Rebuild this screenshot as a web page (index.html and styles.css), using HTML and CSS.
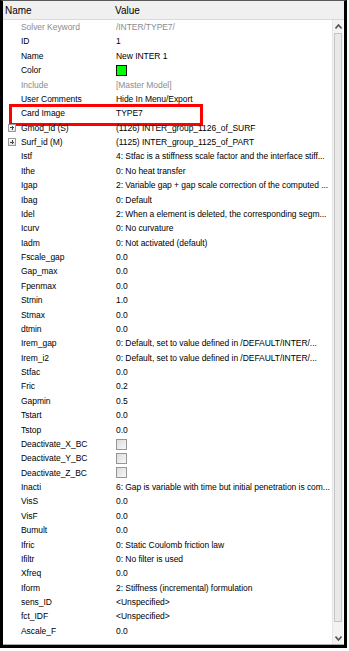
FILE: index.html
```html
<!DOCTYPE html>
<html>
<head>
<meta charset="utf-8">
<link rel="stylesheet" href="styles.css">
</head>
<body>
<div class="frame">
  <div class="header">
    <span class="h-name">Name</span>
    <span class="h-value">Value</span>
  </div>
  <div class="panel">
    <div class="list">
      <div class="row dim"><div class="name"><span class="gutter"></span>Solver Keyword</div><div class="value">/INTER/TYPE7/</div></div>
      <div class="row"><div class="name"><span class="gutter"></span>ID</div><div class="value">1</div></div>
      <div class="row"><div class="name"><span class="gutter"></span>Name</div><div class="value">New INTER 1</div></div>
      <div class="row"><div class="name"><span class="gutter"></span>Color</div><div class="value"><span class="swatch"></span></div></div>
      <div class="row dim"><div class="name"><span class="gutter"></span>Include</div><div class="value">[Master Model]</div></div>
      <div class="row"><div class="name"><span class="gutter"></span>User Comments</div><div class="value">Hide In Menu/Export</div></div>
      <div class="row marked"><div class="name"><span class="gutter"></span>Card Image</div><div class="value">TYPE7</div></div>
      <div class="row"><div class="name"><span class="gutter"><span class="expander"></span></span>Gmod_id (S)</div><div class="value">(1126) INTER_group_1126_of_SURF</div></div>
      <div class="row"><div class="name"><span class="gutter"><span class="expander"></span></span>Surf_id (M)</div><div class="value">(1125) INTER_group_1125_of_PART</div></div>
      <div class="row"><div class="name"><span class="gutter"></span>Istf</div><div class="value">4: Stfac is a stiffness scale factor and the interface stiff...</div></div>
      <div class="row"><div class="name"><span class="gutter"></span>Ithe</div><div class="value">0: No heat transfer</div></div>
      <div class="row"><div class="name"><span class="gutter"></span>Igap</div><div class="value">2: Variable gap + gap scale correction of the computed ...</div></div>
      <div class="row"><div class="name"><span class="gutter"></span>Ibag</div><div class="value">0: Default</div></div>
      <div class="row"><div class="name"><span class="gutter"></span>Idel</div><div class="value">2: When a element is deleted, the corresponding segm...</div></div>
      <div class="row"><div class="name"><span class="gutter"></span>Icurv</div><div class="value">0: No curvature</div></div>
      <div class="row"><div class="name"><span class="gutter"></span>Iadm</div><div class="value">0: Not activated (default)</div></div>
      <div class="row"><div class="name"><span class="gutter"></span>Fscale_gap</div><div class="value">0.0</div></div>
      <div class="row"><div class="name"><span class="gutter"></span>Gap_max</div><div class="value">0.0</div></div>
      <div class="row"><div class="name"><span class="gutter"></span>Fpenmax</div><div class="value">0.0</div></div>
      <div class="row"><div class="name"><span class="gutter"></span>Stmin</div><div class="value">1.0</div></div>
      <div class="row"><div class="name"><span class="gutter"></span>Stmax</div><div class="value">0.0</div></div>
      <div class="row"><div class="name"><span class="gutter"></span>dtmin</div><div class="value">0.0</div></div>
      <div class="row"><div class="name"><span class="gutter"></span>Irem_gap</div><div class="value">0: Default, set to value defined in /DEFAULT/INTER/...</div></div>
      <div class="row"><div class="name"><span class="gutter"></span>Irem_i2</div><div class="value">0: Default, set to value defined in /DEFAULT/INTER/...</div></div>
      <div class="row"><div class="name"><span class="gutter"></span>Stfac</div><div class="value">0.0</div></div>
      <div class="row"><div class="name"><span class="gutter"></span>Fric</div><div class="value">0.2</div></div>
      <div class="row"><div class="name"><span class="gutter"></span>Gapmin</div><div class="value">0.5</div></div>
      <div class="row"><div class="name"><span class="gutter"></span>Tstart</div><div class="value">0.0</div></div>
      <div class="row"><div class="name"><span class="gutter"></span>Tstop</div><div class="value">0.0</div></div>
      <div class="row"><div class="name"><span class="gutter"></span>Deactivate_X_BC</div><div class="value"><span class="check"></span></div></div>
      <div class="row"><div class="name"><span class="gutter"></span>Deactivate_Y_BC</div><div class="value"><span class="check"></span></div></div>
      <div class="row"><div class="name"><span class="gutter"></span>Deactivate_Z_BC</div><div class="value"><span class="check"></span></div></div>
      <div class="row"><div class="name"><span class="gutter"></span>Inacti</div><div class="value">6: Gap is variable with time but initial penetration is com...</div></div>
      <div class="row"><div class="name"><span class="gutter"></span>VisS</div><div class="value">0.0</div></div>
      <div class="row"><div class="name"><span class="gutter"></span>VisF</div><div class="value">0.0</div></div>
      <div class="row"><div class="name"><span class="gutter"></span>Bumult</div><div class="value">0.0</div></div>
      <div class="row"><div class="name"><span class="gutter"></span>Ifric</div><div class="value">0: Static Coulomb friction law</div></div>
      <div class="row"><div class="name"><span class="gutter"></span>Ifiltr</div><div class="value">0: No filter is used</div></div>
      <div class="row"><div class="name"><span class="gutter"></span>Xfreq</div><div class="value">0.0</div></div>
      <div class="row"><div class="name"><span class="gutter"></span>Iform</div><div class="value">2: Stiffness (incremental) formulation</div></div>
      <div class="row"><div class="name"><span class="gutter"></span>sens_ID</div><div class="value">&lt;Unspecified&gt;</div></div>
      <div class="row"><div class="name"><span class="gutter"></span>fct_IDF</div><div class="value">&lt;Unspecified&gt;</div></div>
      <div class="row"><div class="name"><span class="gutter"></span>Ascale_F</div><div class="value">0.0</div></div>
    </div>
    <div class="scrollbar">
      <div class="arrow"><svg width="7" height="5" viewBox="0 0 7 5"><path d="M0.5 4.5 L3.5 1 L6.5 4.5" fill="none" stroke="#555" stroke-width="1.6"/></svg></div>
      <div class="track"><div class="thumb"></div></div>
      <div class="arrow"><svg width="7" height="5" viewBox="0 0 7 5"><path d="M0.5 0.5 L3.5 4 L6.5 0.5" fill="none" stroke="#555" stroke-width="1.6"/></svg></div>
    </div>
  </div>
</div>
</body>
</html>
```

FILE: styles.css
```css
* { box-sizing: border-box; }
html, body { margin: 0; padding: 0; background: #ffffff; }

.frame {
  width: 347px;
  height: 648px;
  border-left: 3px solid #000;
  border-right: 3px solid #000;
  border-bottom: 3px solid #000;
  border-top: 1px solid #5a5a5a;
  display: flex;
  flex-direction: column;
  font-family: "Liberation Sans", Arial, sans-serif;
  color: #000;
}

.header {
  height: 19px;
  flex: none;
  background: #f0f0f0;
  border-bottom: 1px solid #d9d9d9;
  display: grid;
  grid-template-columns: 112px 1fr;
  align-items: center;
  font-size: 10px;
  color: #000;
}
.h-name { padding-left: 2px; }

.panel {
  flex: 1;
  display: flex;
  border-bottom: 1px solid #a9a9a9;
  background: #fff;
}

.list {
  flex: 1;
  min-width: 0;
  display: flex;
  flex-direction: column;
  font-size: 8.5px;
  letter-spacing: -0.05px;
}

.row {
  height: 14.38px;
  line-height: 14.38px;
  display: grid;
  grid-template-columns: 113px 1fr;
  position: relative;
  white-space: nowrap;
}
.row.dim { color: #8c8c8c; }

.name {
  display: flex;
  align-items: center;
}
.gutter {
  width: 18px;
  flex: none;
  display: flex;
  align-items: center;
  padding-left: 5px;
}
.value {
  display: flex;
  align-items: center;
}

.expander {
  width: 8px;
  height: 8px;
  border: 1px solid #9a9a9a;
  background: linear-gradient(#ffffff, #e6e6e6);
  position: relative;
}
.expander::before {
  content: "";
  position: absolute;
  left: 1px; top: 2.5px;
  width: 4px; height: 1px;
  background: #444;
}
.expander::after {
  content: "";
  position: absolute;
  left: 2.5px; top: 1px;
  width: 1px; height: 4px;
  background: #444;
}

.swatch {
  width: 11px;
  height: 11px;
  border: 1px solid #111;
  background: #00ff00;
}

.check {
  width: 11px;
  height: 11px;
  border: 1px solid #969696;
  background: linear-gradient(135deg, #dcdcdc, #f8f8f8);
}

.row.marked::after {
  content: "";
  position: absolute;
  left: 6px;
  top: -2px;
  width: 188px;
  height: 16px;
  border: 3px solid #ff0000;
}

.scrollbar {
  width: 11px;
  flex: none;
  margin-right: 1px;
  background: #f3f3f3;
  border-left: 1px solid #e6e6e6;
  display: flex;
  flex-direction: column;
}
.arrow {
  height: 12px;
  display: flex;
  align-items: center;
  justify-content: center;
}
.track {
  flex: 1;
  padding: 1px 1px 10px 1px;
  display: flex;
}
.thumb {
  flex: 1;
  border: 1px solid #c4c4c4;
  background: #e9e9e9;
}
```
